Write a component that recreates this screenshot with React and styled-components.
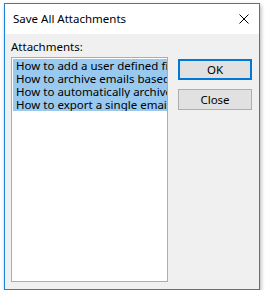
import styled, { createGlobalStyle } from "styled-components";

const GlobalStyle = createGlobalStyle`
  html, body {
    margin: 0;
    padding: 0;
    background: #ffffff;
  }
  body {
    font-family: "Noto Sans", "Liberation Sans", sans-serif;
    font-size: 11.5px;
  }
`;

const Page = styled.div`
  padding: 3px 0 0 4px;
`;

const Window = styled.div`
  width: 254px;
  height: 285px;
  border: 1px solid #1883d7;
  background: #f0f0f0;
  box-shadow: 1px 2px 4px rgba(0, 0, 0, 0.3);
  display: flex;
  flex-direction: column;
`;

const TitleBar = styled.div`
  height: 30px;
  background: #ffffff;
  display: flex;
  align-items: center;
  justify-content: space-between;
  padding: 0 10px 0 8px;
  color: #000;
`;

const Title = styled.span`
  font-size: 11.5px;
  line-height: 15px;
  margin-top: -1px;
`;

const CloseX = styled.svg`
  width: 10px;
  height: 10px;
`;

const Body = styled.div`
  flex: 1;
  display: grid;
  grid-template-columns: 157px 74px;
  grid-template-rows: auto 1fr;
  column-gap: 10px;
  padding: 5px 7px 7px 6px;
  min-height: 0;
`;

const Label = styled.div`
  grid-column: 1 / 3;
  line-height: 15px;
  height: 18px;
  color: #000;
`;

const ListBox = styled.div`
  background: #ffffff;
  border: 1px solid #adadad;
  padding: 1px 0 0 1px;
  overflow: hidden;
`;

const Row = styled.div`
  height: 13px;
  line-height: 13px;
  padding-left: 3px;
  white-space: nowrap;
  overflow: hidden;
  background: ${(p) => (p.$selected ? "#99c9ef" : "transparent")};
  color: #000;
`;

const Buttons = styled.div`
  display: flex;
  flex-direction: column;
  gap: 9px;
  padding-top: 2px;
`;

const Button = styled.div`
  height: 21px;
  box-sizing: border-box;
  background: #e1e1e1;
  border: ${(p) => (p.$default ? "2px solid #0078d7" : "1px solid #adadad")};
  display: flex;
  align-items: center;
  justify-content: center;
  color: #000;
`;

const items = [
  "How to add a user defined field to Outlook",
  "How to archive emails based on date",
  "How to automatically archive emails",
  "How to export a single email",
];

export default function App() {
  return (
    <Page>
      <GlobalStyle />
      <Window>
        <TitleBar>
          <Title>Save All Attachments</Title>
          <CloseX viewBox="0 0 10 10">
            <path d="M0.5 0.5 L9.5 9.5 M9.5 0.5 L0.5 9.5" stroke="#000" strokeWidth="1" fill="none" />
          </CloseX>
        </TitleBar>
        <Body>
          <Label>Attachments:</Label>
          <ListBox>
            {items.map((t) => (
              <Row key={t} $selected>
                {t}
              </Row>
            ))}
          </ListBox>
          <Buttons>
            <Button $default>OK</Button>
            <Button>Close</Button>
          </Buttons>
        </Body>
      </Window>
    </Page>
  );
}
